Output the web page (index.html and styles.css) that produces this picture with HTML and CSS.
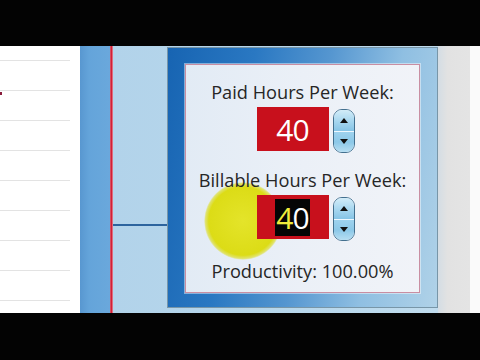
FILE: index.html
```html
<!DOCTYPE html>
<html>
<head>
<meta charset="utf-8">
<title>Productivity</title>
<link rel="stylesheet" href="styles.css">
</head>
<body>
<div class="screen">
  <div class="letterbox top"></div>
  <div class="content">
    <div class="sidebar">
      <div class="row"></div>
      <div class="row"><span class="mark"></span></div>
      <div class="row"></div>
      <div class="row"></div>
      <div class="row"></div>
      <div class="row"></div>
      <div class="row"></div>
      <div class="row"></div>
      <div class="row"></div>
    </div>
    <div class="bluecol"></div>
    <div class="redline"></div>
    <div class="main">
      <div class="connector"><div class="hline"></div></div>
      <div class="panel">
        <div class="inner">
          <div class="cursor"></div>
          <div class="label first">Paid Hours Per Week:</div>
          <div class="field">
            <div class="value">40</div>
            <div class="spin"><div class="spin-up"></div><div class="spin-down"></div></div>
          </div>
          <div class="label second">Billable Hours Per Week:</div>
          <div class="field">
            <div class="value"><span class="sel"><span class="caret">4</span>0</span></div>
            <div class="spin"><div class="spin-up"></div><div class="spin-down"></div></div>
          </div>
          <div class="label third">Productivity: 100.00%</div>
        </div>
      </div>
    </div>
    <div class="grayside"></div>
    <div class="whiteside"></div>
  </div>
  <div class="letterbox bottom"></div>
</div>
</body>
</html>
```

FILE: styles.css
```css
html, body {
  margin: 0;
  padding: 0;
  background: #000;
}
.screen {
  width: 480px;
  height: 360px;
  display: flex;
  flex-direction: column;
  overflow: hidden;
  font-family: "Open Sans", "Noto Sans", sans-serif;
}
.letterbox { background: #030303; }
.letterbox.top { height: 46px; }
.letterbox.bottom { flex: 1; }
.content {
  height: 267px;
  display: flex;
}
.sidebar {
  width: 70px;
  padding: 14px 10px 0 0;
  background: #fff;
  overflow: hidden;
}
.row {
  height: 30px;
  box-sizing: border-box;
  border-top: 1px solid #e3e3e3;
}
.mark {
  display: block;
  width: 2px;
  height: 3px;
  margin-top: 1px;
  background: #8a1c3c;
}
.bluecol {
  width: 30px;
  background: linear-gradient(to right, #5897d0, #64a4da 30%, #6aa8dc);
}
.redline {
  width: 3px;
  background: linear-gradient(to right, #e07a8a, #d01c34 35%, #d42438 65%, #e8b0bc);
}
.main {
  width: 325px;
  display: flex;
  padding-top: 1px;
  background: linear-gradient(to right, #b2d3ea, #b9d8ec 60%, #c0dcee);
}
.connector {
  width: 54px;
  padding-top: 177px;
}
.hline {
  height: 2px;
  background: #2d649e;
}
.panel {
  width: 271px;
  height: 261px;
  box-sizing: border-box;
  border: 1px solid #7896a8;
  padding: 16px 17px 14px 17px;
  background: linear-gradient(100deg, #1764b2 0%, #2a78c2 28%, #5596d0 52%, #8fbfe2 75%, #b0d2e8 100%);
}
.inner {
  position: relative;
  height: 100%;
  box-sizing: border-box;
  border: 1px solid #c98ea2;
  box-shadow: 0 0 0 1px rgba(255, 255, 255, 0.45);
  background: linear-gradient(to right, #e2ebf5, #ebf0f7 50%, #f1f3f8);
  display: flex;
  flex-direction: column;
  align-items: center;
}
.cursor {
  position: absolute;
  left: 18px;
  top: 117px;
  width: 78px;
  height: 78px;
  border-radius: 50%;
  background: radial-gradient(circle, #e4e42a 0%, #dcdc16 62%, rgba(220, 220, 20, 0.6) 68%, rgba(220, 220, 20, 0) 71%);
}
.label {
  position: relative;
  font-size: 18.2px;
  line-height: 22px;
  color: #262626;
  white-space: nowrap;
}
.label.first { margin-top: 16px; }
.label.second { margin-top: 16px; }
.label.third { margin-top: 19px; }
.field {
  position: relative;
  display: flex;
  align-items: flex-start;
  gap: 4px;
  margin-top: 4px;
  margin-left: 6px;
}
.value {
  width: 72px;
  height: 44px;
  background: #c8101c;
  color: #fff;
  font-size: 30px;
  letter-spacing: -1px;
  display: flex;
  align-items: center;
  justify-content: center;
}
.sel {
  display: inline-block;
  height: 37px;
  line-height: 37px;
  padding: 0 1px 0 1px;
  background: #050505;
}
.caret { color: #f0ec3c; }
.spin {
  width: 22px;
  height: 44px;
  margin-top: 2px;
  box-sizing: border-box;
  border: 1px solid #43708f;
  border-radius: 9px;
  overflow: hidden;
  display: flex;
  flex-direction: column;
  box-shadow: inset 0 0 0 1px rgba(255, 255, 255, 0.6);
}
.spin-up, .spin-down {
  flex: 1;
  display: flex;
  align-items: center;
  justify-content: center;
}
.spin-up { background: linear-gradient(#d2ecf8, #a6d6ef 55%, #86c4e6); }
.spin-down {
  border-top: 1px solid #eef8ff;
  background: linear-gradient(#9ed2ee, #8cc8e8 50%, #b6def2);
}
.spin-up::before {
  content: "";
  border-left: 4px solid transparent;
  border-right: 4px solid transparent;
  border-bottom: 5px solid #111;
}
.spin-down::before {
  content: "";
  border-left: 4px solid transparent;
  border-right: 4px solid transparent;
  border-top: 5px solid #111;
}
.grayside {
  width: 32px;
  background: linear-gradient(to right, #d4dde4, #e2e2e2 30%, #e4e4e4);
}
.whiteside {
  flex: 1;
  background: #fafafa;
}
```
